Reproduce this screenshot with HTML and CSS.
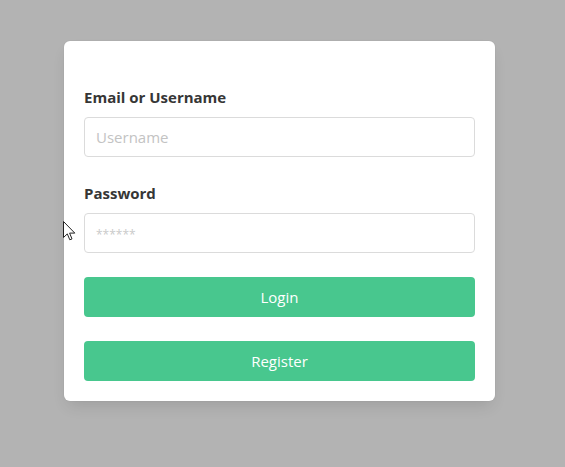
FILE: index.html
```html
<!DOCTYPE html>
<html>
<head>
<meta charset="utf-8">
<link rel="stylesheet" href="styles.css">
</head>
<body>
<div class="page">
  <form class="box">
    <div class="field">
      <label class="label">Email or Username</label>
      <input class="input" type="text" placeholder="Username">
    </div>
    <div class="field">
      <label class="label">Password</label>
      <input class="input input-password" type="password" placeholder="******">
    </div>
    <button type="button" class="button">Login</button>
    <button type="button" class="button">Register</button>
  </form>
</div>
<svg class="cursor" width="13" height="21" viewBox="0 0 13 21">
  <path d="M0.5 0.5 L0.5 16.5 L4.3 12.9 L6.8 18.8 L9 17.9 L6.6 12.1 L11.8 12.1 Z" fill="#fff" stroke="#222" stroke-width="1" stroke-linejoin="miter"/>
</svg>
</body>
</html>
```
FILE: styles.css
```css
html, body {
  margin: 0;
  padding: 0;
}
body {
  background: #b3b3b3;
  width: 565px;
  height: 467px;
  overflow: hidden;
  font-family: "Open Sans", "Noto Sans", sans-serif;
  position: relative;
}
.page {
  padding: 41px 0 0 64px;
}
.box {
  box-sizing: border-box;
  width: 431px;
  height: 360px;
  background: #fff;
  border-radius: 6px;
  padding: 20px;
  box-shadow: 0 8px 16px -4px rgba(10, 10, 10, 0.12), 0 0 0 1px rgba(10, 10, 10, 0.02);
  display: flex;
  flex-direction: column;
}
.field {
  margin-top: 25px;
  display: flex;
  flex-direction: column;
}
.label {
  font-size: 15px;
  line-height: 22px;
  font-weight: 700;
  color: #363636;
  margin-bottom: 9px;
}
.input {
  box-sizing: border-box;
  height: 40px;
  width: 100%;
  border: 1px solid #dbdbdb;
  border-radius: 4px;
  padding: 0 11px;
  font-family: inherit;
  font-size: 15px;
  color: #363636;
  background: #fff;
  outline: none;
}
.input::placeholder {
  color: #c3c3c3;
}
.input-password::placeholder {
  font-size: 12px;
  color: #cacaca;
}
.button {
  box-sizing: border-box;
  margin-top: 24px;
  height: 40px;
  width: 100%;
  border: none;
  border-radius: 4px;
  background: #48c78e;
  color: #fff;
  font-family: inherit;
  font-size: 15px;
  padding: 0;
}
.cursor {
  position: absolute;
  left: 63px;
  top: 221px;
}
```
